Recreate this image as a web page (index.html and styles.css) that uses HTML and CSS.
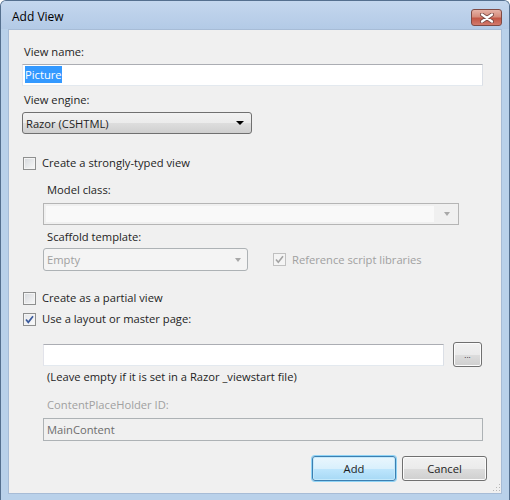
FILE: index.html
```html
<!DOCTYPE html>
<html lang="en">
<head>
    <meta charset="UTF-8">
    <meta name="viewport" content="width=device-width, initial-scale=1.0">
    <title>Add View</title>
    <link rel="stylesheet" href="styles.css">
</head>
<body>

<div class="window">
    <div class="titlebar">
        <span class="title">Add View</span>
        <button class="close">
            <svg width="14" height="10" viewBox="0 0 14 10">
                <path d="M2 1.5 L12 8.5 M12 1.5 L2 8.5" stroke="#7a4a44" stroke-width="4" stroke-linecap="round"/>
                <path d="M2 1.5 L12 8.5 M12 1.5 L2 8.5" stroke="#ffffff" stroke-width="2.2" stroke-linecap="round"/>
            </svg>
        </button>
    </div>

    <div class="client">
        <div class="label top">View name:</div>
        <div class="textbox name-box"><span class="selected">Picture</span></div>

        <div class="label top gap-s">View engine:</div>
        <div class="dropdown engine">
            <span>Razor (CSHTML)</span>
            <span class="arrow"></span>
        </div>

        <div class="check-row strong">
            <span class="checkbox"></span>
            <span>Create a strongly-typed view</span>
        </div>

        <div class="indent">
            <div class="label sub model-label">Model class:</div>
            <div class="combo">
                <div class="combo-field"></div>
                <span class="arrow dim"></span>
            </div>

            <div class="label sub scaffold-label">Scaffold template:</div>
            <div class="scaffold-row">
                <div class="dropdown off">
                    <span>Empty</span>
                    <span class="arrow dim"></span>
                </div>
                <div class="check-row off ref">
                    <span class="checkbox checked off">
                        <svg width="11" height="11" viewBox="0 0 11 11"><path d="M2 5.5 L4.3 8.3 L9 2.2" fill="none" stroke="#a3a3a3" stroke-width="1.6"/></svg>
                    </span>
                    <span>Reference script libraries</span>
                </div>
            </div>
        </div>

        <div class="check-row partial">
            <span class="checkbox"></span>
            <span>Create as a partial view</span>
        </div>
        <div class="check-row layout">
            <span class="checkbox checked">
                <svg width="11" height="11" viewBox="0 0 11 11"><path d="M2 5.5 L4.3 8.3 L9 2.2" fill="none" stroke="#3a5a9c" stroke-width="1.7"/></svg>
            </span>
            <span>Use a layout or master page:</span>
        </div>

        <div class="indent">
            <div class="layout-row">
                <div class="textbox layout-box"></div>
                <button class="btn browse">...</button>
            </div>
            <div class="label sub hint">(Leave empty if it is set in a Razor _viewstart file)</div>
            <div class="label sub off cph-label">ContentPlaceHolder ID:</div>
            <div class="textbox readonly">MainContent</div>
        </div>

        <div class="actions">
            <button class="btn default">Add</button>
            <button class="btn">Cancel</button>
        </div>

        <svg class="grip" width="8" height="8" viewBox="0 0 8 8">
            <rect x="6" y="0" width="1" height="1" fill="#b8b8b8"/>
            <rect x="3" y="3" width="1" height="1" fill="#b8b8b8"/>
            <rect x="6" y="3" width="1" height="1" fill="#b8b8b8"/>
            <rect x="0" y="6" width="1" height="1" fill="#b8b8b8"/>
            <rect x="3" y="6" width="1" height="1" fill="#b8b8b8"/>
            <rect x="6" y="6" width="1" height="1" fill="#b8b8b8"/>
        </svg>
    </div>
</div>

</body>
</html>
```

FILE: styles.css
```css
body {
    margin: 0;
    font-family: "Open Sans", "Noto Sans", sans-serif;
    font-size: 11.2px;
    color: #1e1e1e;
    background: #ffffff;
}
.window {
    width: 510px;
    height: 500px;
    box-sizing: border-box;
    border: 1px solid #55708f;
    border-bottom: none;
    border-radius: 6px 6px 0 0;
    background: #b9d1ea;
    display: flex;
    flex-direction: column;
}
.titlebar {
    height: 28px;
    flex-shrink: 0;
    display: flex;
    align-items: flex-start;
    padding: 0 7px 0 11px;
    background: linear-gradient(#c4d7ee, #b3cae6);
    border-radius: 5px 5px 0 0;
}
.title {
    font-size: 12px;
    line-height: 16px;
    margin-top: 8px;
    color: #000000;
}
.close {
    margin-left: auto;
    margin-top: 8px;
    width: 31px;
    height: 17px;
    padding: 0;
    border: 1px solid #7f4a44;
    border-radius: 3px;
    background: linear-gradient(#e6b2a6 0%, #d58c7c 45%, #c25645 55%, #d37a6c 100%);
    display: flex;
    align-items: center;
    justify-content: center;
}
.client {
    position: relative;
    margin: 0 7px;
    height: 465px;
    box-sizing: border-box;
    padding: 15px 15px 0 14px;
    background: #f0f0f0;
    box-shadow: inset 0 0 0 1px #a7bcd6;
}
.label {
    line-height: 16px;
}
.label.top {
    margin-left: 2px;
}
.label.sub {
    margin-left: 4px;
}
.gap-s {
    margin-top: 6px;
}
.textbox {
    box-sizing: border-box;
    height: 22px;
    border: 1px solid #abadb3;
    border-left-color: #e2e3ea;
    border-right-color: #dbdfe6;
    border-bottom-color: #e3e9ef;
    background: #ffffff;
    padding: 0 2px;
    line-height: 20px;
}
.name-box {
    margin-top: 4px;
    width: 461px;
}
.selected {
    background: #3399ff;
    color: #ffffff;
    padding: 1px 0;
}
.dropdown {
    box-sizing: border-box;
    height: 22px;
    display: flex;
    align-items: center;
    justify-content: space-between;
    padding: 0 7px 0 3px;
    border: 1px solid #707070;
    border-radius: 3px;
    background: linear-gradient(#f2f2f2 0%, #ebebeb 50%, #dddddd 51%, #cfcfcf 100%);
}
.engine {
    margin-top: 4px;
    width: 230px;
}
.arrow {
    width: 0;
    height: 0;
    border-left: 4px solid transparent;
    border-right: 4px solid transparent;
    border-top: 4px solid #000000;
}
.arrow.dim {
    border-left-width: 3.5px;
    border-right-width: 3.5px;
    border-top: 4px solid #a8a8a8;
}
.check-row {
    display: flex;
    align-items: center;
    line-height: 16px;
    margin-left: 1px;
}
.checkbox {
    width: 13px;
    height: 13px;
    box-sizing: border-box;
    border: 1px solid #8e8f8f;
    margin-right: 6px;
    background: linear-gradient(135deg, #d5d8dc, #f8f8f8);
    box-shadow: inset 0 0 0 1px #f4f4f4;
    display: flex;
    align-items: center;
    justify-content: center;
}
.checkbox.checked {
    background: linear-gradient(135deg, #e4e6ea, #fbfbfb);
}
.checkbox svg {
    display: block;
}
.checkbox.off {
    border-color: #c0c0c0;
    background: #f4f4f4;
}
.off {
    color: #a0a0a0;
}
.strong {
    margin-top: 21px;
}
.indent {
    margin-left: 21px;
}
.model-label {
    margin-top: 11px;
}
.combo {
    margin-top: 5px;
    width: 416px;
    height: 22px;
    box-sizing: border-box;
    border: 1px solid #b5b5b5;
    background: #f0f0f0;
    display: flex;
    align-items: center;
    padding: 2px 8px 2px 2px;
}
.combo-field {
    flex: 1;
    height: 100%;
    background: #f9f9f9;
    margin-right: 10px;
}
.scaffold-label {
    margin-top: 4px;
}
.scaffold-row {
    margin-top: 3px;
    display: flex;
    align-items: center;
}
.dropdown.off {
    width: 205px;
    height: 23px;
    border-color: #adb2b5;
    background: #f4f4f4;
    padding-left: 3px;
    padding-right: 6px;
}
.ref {
    margin-left: 25px;
}
.partial {
    margin-top: 19px;
}
.layout {
    margin-top: 5px;
}
.layout-row {
    margin-top: 15px;
    display: flex;
    align-items: center;
    gap: 9px;
}
.layout-box {
    width: 401px;
}
.btn {
    font-family: "Open Sans", "Noto Sans", sans-serif;
    font-size: 11.2px;
    color: #1e1e1e;
    height: 25px;
    padding: 0;
    border: 1px solid #707070;
    border-radius: 3px;
    background: linear-gradient(#f2f2f2 0%, #ebebeb 50%, #dddddd 51%, #cfcfcf 100%);
    box-shadow: inset 0 0 0 1px #fcfcfc;
}
.browse {
    width: 29px;
    font-size: 8px;
    line-height: 10px;
}
.hint {
    margin-top: 2px;
}
.cph-label {
    margin-top: 12px;
}
.readonly {
    margin-top: 5px;
    width: 440px;
    height: 23px;
    line-height: 21px;
    padding: 0 3px;
    background: #f0f0f0;
    border: 1px solid #adb2b5;
    color: #6d6d6d;
}
.actions {
    margin-top: 15px;
    display: flex;
    justify-content: flex-end;
    gap: 6px;
}
.actions .btn {
    width: 85px;
}
.actions .default {
    width: 84px;
    border-color: #3c7fb1;
    background: linear-gradient(#eaf6fd 0%, #d9f0fc 50%, #bee6fd 51%, #a7d9f5 100%);
    box-shadow: inset 0 0 0 1px #c4e9fb, 0 0 0 1px #8fd3f5;
}
.grip {
    position: absolute;
    right: 1px;
    bottom: 2px;
}
```
